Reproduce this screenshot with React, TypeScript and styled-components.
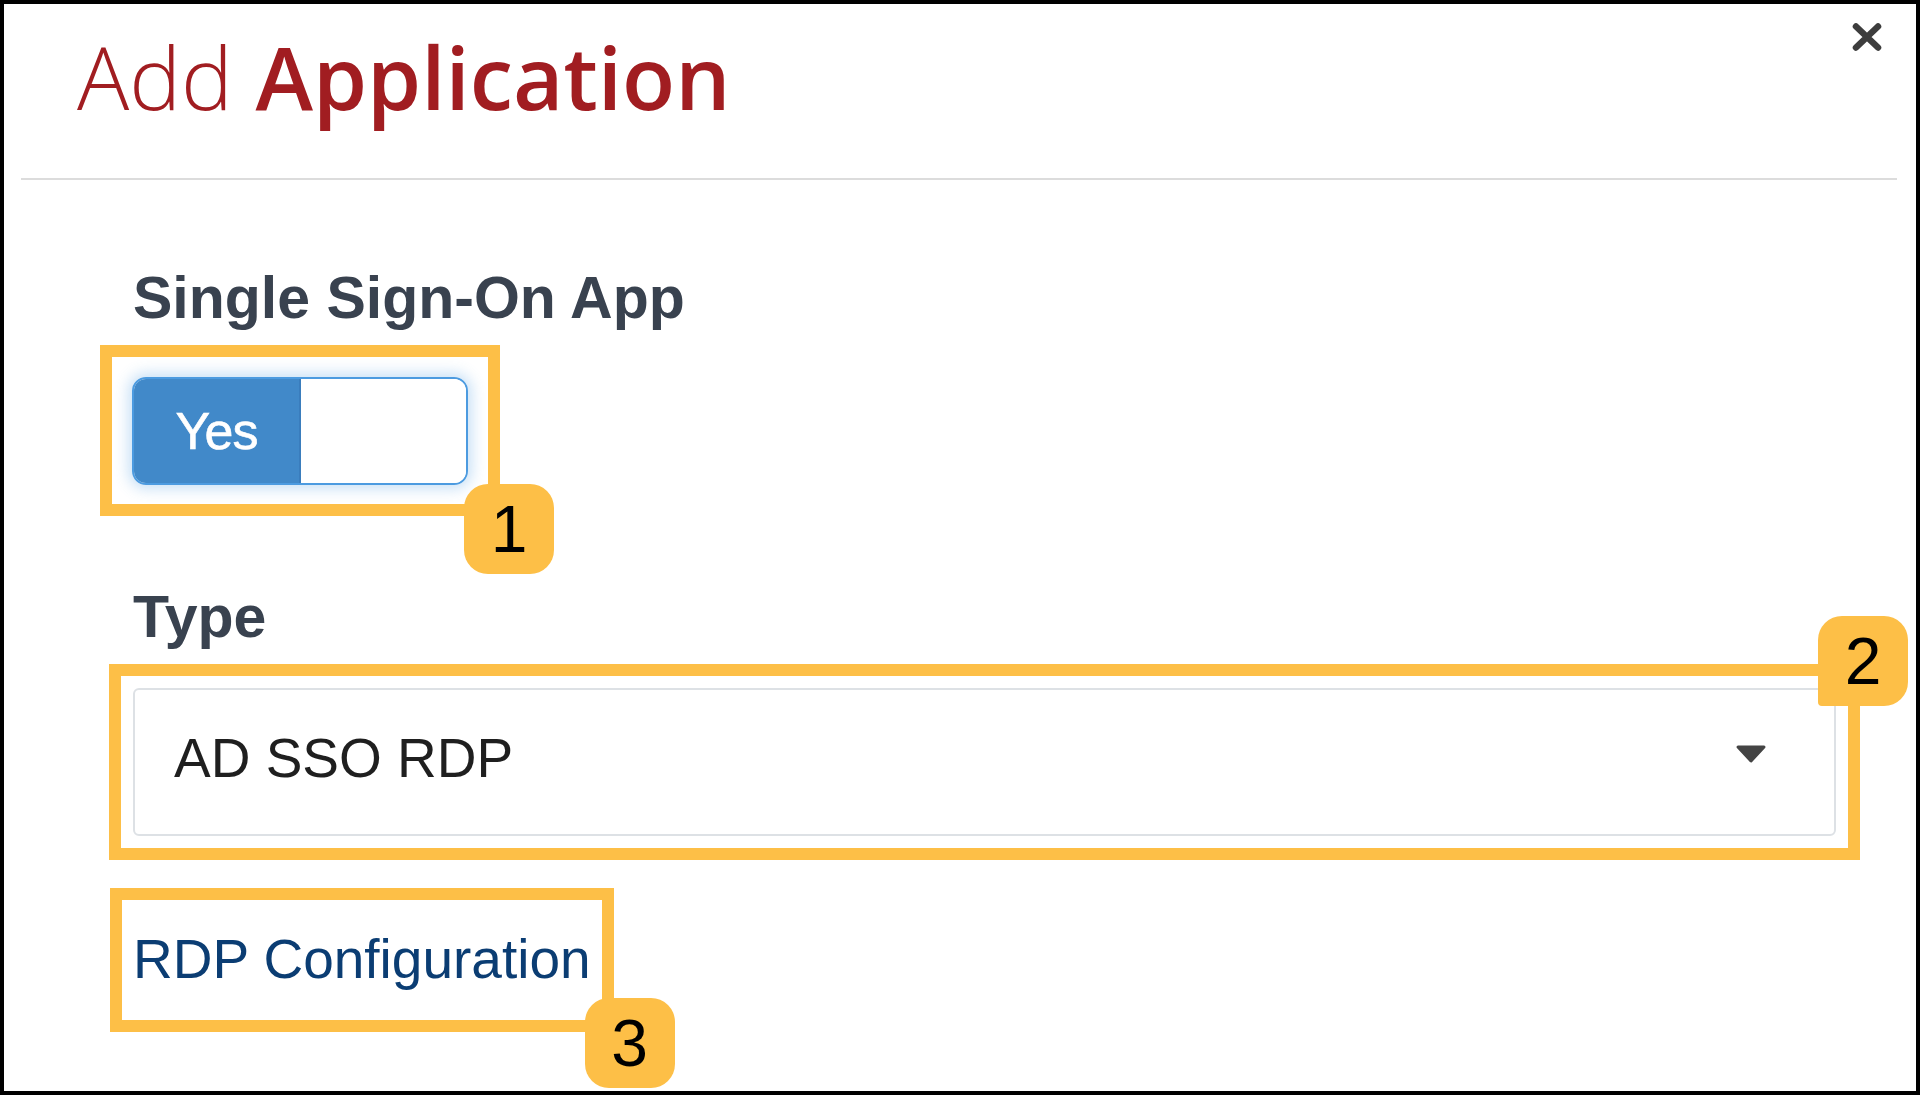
import React from "react";
import { styled, createGlobalStyle } from "styled-components";

const GlobalStyle = createGlobalStyle`
  html, body {
    margin: 0;
    padding: 0;
    background: #fff;
  }
  body {
    font-family: "Liberation Sans", Arial, sans-serif;
  }
`;

type BadgeProps = {
    $right: number;
    $top?: number;
    $bottom?: number;
    $flatCorner?: boolean;
};

export default function App() {
    return (
        <>
            <GlobalStyle />
            <Frame>
                <Header>
                    <Title>
                        <TitleLight>Add </TitleLight>
                        <TitleStrong>Application</TitleStrong>
                    </Title>
                    <CloseButton aria-label="Close">
                        <svg width="32" height="30" viewBox="0 0 32 30">
                            <path d="M5 4.5 L27 25.5 M27 4.5 L5 25.5" stroke="#3d3d3d" strokeWidth="6.5" strokeLinecap="round" fill="none" />
                        </svg>
                    </CloseButton>
                </Header>

                <Content>
                    <Field $gap={85}>
                        <FieldLabel>Single Sign-On App</FieldLabel>
                        <ToggleHighlight>
                            <Toggle>
                                <ToggleOn>Yes</ToggleOn>
                                <ToggleOff />
                            </Toggle>
                            <Badge $right={-66} $bottom={-70}>1</Badge>
                        </ToggleHighlight>
                    </Field>

                    <Field $gap={68}>
                        <FieldLabel>Type</FieldLabel>
                        <SelectHighlight>
                            <Select>
                                <SelectValue>AD SSO RDP</SelectValue>
                                <Caret>
                                    <svg width="32" height="20" viewBox="0 0 32 20">
                                        <path d="M3 3 L29 3 L16 17 Z" fill="#444" stroke="#444" strokeWidth="3" strokeLinejoin="round" />
                                    </svg>
                                </Caret>
                            </Select>
                            <Badge $right={-60} $top={-60} $flatCorner>2</Badge>
                        </SelectHighlight>
                    </Field>

                    <LinkHighlight>
                        <ConfigLink>RDP Configuration</ConfigLink>
                        <Badge $right={-73} $bottom={-68}>3</Badge>
                    </LinkHighlight>
                </Content>
            </Frame>
        </>
    );
}

const Frame = styled.div`
    width: 1920px;
    height: 1095px;
    box-sizing: border-box;
    border: 4px solid #000;
    background: #fff;
    overflow: hidden;
`;

const Header = styled.header`
    display: flex;
    justify-content: space-between;
    align-items: flex-start;
    margin: 0 19px 0 17px;
    padding: 13px 0 43px 56px;
    border-bottom: 2px solid #dcdcdc;
`;

const Title = styled.h1`
    margin: 0;
    font-family: "Open Sans", sans-serif;
    font-size: 87px;
    line-height: 118px;
    color: #a11d21;
    white-space: nowrap;
`;

const TitleLight = styled.span`
    font-weight: 300;
`;

const TitleStrong = styled.span`
    font-weight: 600;
`;

const CloseButton = styled.button`
    margin: 5px 14px 0 0;
    padding: 0;
    border: 0;
    background: none;
    line-height: 0;
    cursor: pointer;
`;

const Content = styled.main`
    padding: 0 80px 0 129px;
`;

const Field = styled.section<{ $gap: number }>`
    margin-top: ${(p) => p.$gap}px;
`;

const FieldLabel = styled.label`
    display: block;
    margin-bottom: 14px;
    font-size: 59px;
    font-weight: 700;
    line-height: 66px;
    color: #39424f;
`;

const Highlight = styled.div`
    position: relative;
    box-sizing: border-box;
    border: 12px solid #fdbf47;
`;

const ToggleHighlight = styled(Highlight)`
    display: inline-block;
    margin-left: -33px;
    padding: 20px 20px 19px;
    vertical-align: top;
`;

const SelectHighlight = styled(Highlight)`
    margin: 0 -24px;
    padding: 12px;
`;

const LinkHighlight = styled(Highlight)`
    display: inline-block;
    margin: 28px 0 0 -23px;
    padding: 27px 11px 29px 11px;
`;

const Toggle = styled.div`
    display: flex;
    width: 336px;
    height: 108px;
    box-sizing: border-box;
    border: 2px solid #4c9be0;
    border-radius: 14px;
    overflow: hidden;
    box-shadow: 0 0 14px 4px rgba(76, 155, 224, 0.3);
`;

const ToggleOn = styled.div`
    display: flex;
    align-items: center;
    justify-content: center;
    width: 165px;
    background: #4189c9;
    border-right: 2px solid #3a7dbd;
    color: #fff;
    font-size: 52px;
    letter-spacing: -1px;
    -webkit-text-stroke: 0.6px #fff;
`;

const ToggleOff = styled.div`
    flex: 1;
    background: #fff;
`;

const Select = styled.div`
    display: flex;
    align-items: flex-start;
    height: 148px;
    box-sizing: border-box;
    padding: 36px 67px 0 39px;
    border: 2px solid #dde1e5;
    border-radius: 6px;
    background: #fff;
`;

const SelectValue = styled.span`
    font-size: 55px;
    color: #1f1f1f;
`;

const Caret = styled.span`
    margin: 18px 0 0 auto;
    line-height: 0;
`;

const ConfigLink = styled.a`
    display: block;
    font-size: 55px;
    color: #0b3d73;
    text-decoration: none;
    cursor: pointer;
`;

const Badge = styled.span<BadgeProps>`
    position: absolute;
    right: ${(p) => p.$right}px;
    ${(p) => (p.$top !== undefined ? `top: ${p.$top}px;` : "")}
    ${(p) => (p.$bottom !== undefined ? `bottom: ${p.$bottom}px;` : "")}
    z-index: 2;
    display: flex;
    align-items: center;
    justify-content: center;
    width: 90px;
    height: 90px;
    border-radius: ${(p) => (p.$flatCorner ? "24px 24px 24px 4px" : "24px")};
    background: #fdbf47;
    color: #000;
    font-size: 66px;
    line-height: 1;
`;
